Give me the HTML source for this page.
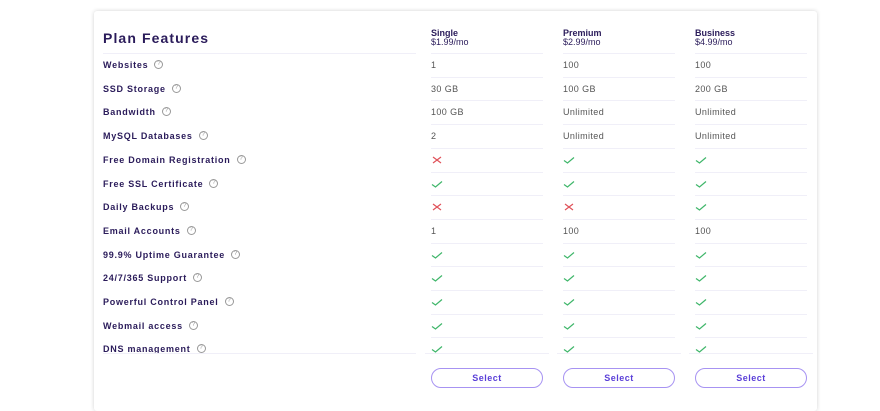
<!DOCTYPE html>
<html><head><style>
body{margin:0;width:880px;height:400px;background:#fff;position:relative;overflow:hidden;font-family:"Liberation Sans",sans-serif}
.card{position:absolute;left:94px;top:11px;width:723px;height:400px;background:#fff;box-shadow:0 0 4px rgba(0,0,0,.18);border-radius:3px}
.t{position:absolute;left:103px;top:30px;font-size:14px;font-weight:bold;color:#2a1b5a;letter-spacing:1.1px}
.h{position:absolute;font-size:9px;color:#2a1b5a;line-height:9px}
.h b{display:block}
.row{position:absolute;left:0;width:880px;height:24px}
.l{position:absolute;left:103px;top:7px;font-size:9px;line-height:10px;font-weight:bold;color:#2a1b5a;letter-spacing:.75px;white-space:nowrap}
.q{display:inline-block;width:7px;height:7px;border:1px solid #999;border-radius:50%;font-size:6px;line-height:7px;text-align:center;color:#999;margin-left:6px;vertical-align:top;margin-top:0;font-weight:normal;letter-spacing:0}
.v{position:absolute;top:7px;font-size:9px;line-height:10px;color:#555;letter-spacing:.4px}
.c1{left:431px}.c2{left:563px}.c3{left:695px}
.ln{position:absolute;top:0;height:1px;background:#f0eff8}
.bt{position:absolute;top:368px;width:110px;height:18px;border:1px solid #a793f2;border-radius:10px;color:#5a3fd8;font-size:9px;font-weight:bold;text-align:center;line-height:18px;letter-spacing:.5px}
svg{position:absolute;top:8px}
</style></head><body>
<div class="card"></div>
<div class="t">Plan Features</div>
<div class="ln" style="left:103px;width:313px;top:53px"></div>
<div class="h c1" style="top:29px"><b>Single</b>$1.99/mo</div>
<div class="h c2" style="top:29px"><b>Premium</b>$2.99/mo</div>
<div class="h c3" style="top:29px"><b>Business</b>$4.99/mo</div>
<svg width="0" height="0" style="position:absolute">
<defs>
<symbol id="ok" viewBox="0 0 12 8"><path d="M1 4.5 L4.5 7 L11 1.5" fill="none" stroke="#3fb66a" stroke-width="1.2"/></symbol>
<symbol id="no" viewBox="0 0 12 8"><path d="M2 1 L10 7 M10 1 L2 7" fill="none" stroke="#e0525a" stroke-width="1.2"/></symbol>
</defs></svg>

<div class="row" style="top:53px"><div class="ln" style="left:431px;width:112px"></div><div class="ln" style="left:563px;width:112px"></div><div class="ln" style="left:695px;width:112px"></div><div class="l">Websites<span class="q">?</span></div><div class="v c1">1</div><div class="v c2">100</div><div class="v c3">100</div></div>
<div class="row" style="top:76.7px"><div class="ln" style="left:431px;width:112px"></div><div class="ln" style="left:563px;width:112px"></div><div class="ln" style="left:695px;width:112px"></div><div class="l">SSD Storage<span class="q">?</span></div><div class="v c1">30 GB</div><div class="v c2">100 GB</div><div class="v c3">200 GB</div></div>
<div class="row" style="top:100.4px"><div class="ln" style="left:431px;width:112px"></div><div class="ln" style="left:563px;width:112px"></div><div class="ln" style="left:695px;width:112px"></div><div class="l">Bandwidth<span class="q">?</span></div><div class="v c1">100 GB</div><div class="v c2">Unlimited</div><div class="v c3">Unlimited</div></div>
<div class="row" style="top:124.1px"><div class="ln" style="left:431px;width:112px"></div><div class="ln" style="left:563px;width:112px"></div><div class="ln" style="left:695px;width:112px"></div><div class="l">MySQL Databases<span class="q">?</span></div><div class="v c1">2</div><div class="v c2">Unlimited</div><div class="v c3">Unlimited</div></div>
<div class="row" style="top:147.8px"><div class="ln" style="left:431px;width:112px"></div><div class="ln" style="left:563px;width:112px"></div><div class="ln" style="left:695px;width:112px"></div><div class="l">Free Domain Registration<span class="q">?</span></div><svg class="c1" width="12" height="8"><use href="#no"/></svg><svg class="c2" width="12" height="8"><use href="#ok"/></svg><svg class="c3" width="12" height="8"><use href="#ok"/></svg></div>
<div class="row" style="top:171.5px"><div class="ln" style="left:431px;width:112px"></div><div class="ln" style="left:563px;width:112px"></div><div class="ln" style="left:695px;width:112px"></div><div class="l">Free SSL Certificate<span class="q">?</span></div><svg class="c1" width="12" height="8"><use href="#ok"/></svg><svg class="c2" width="12" height="8"><use href="#ok"/></svg><svg class="c3" width="12" height="8"><use href="#ok"/></svg></div>
<div class="row" style="top:195.2px"><div class="ln" style="left:431px;width:112px"></div><div class="ln" style="left:563px;width:112px"></div><div class="ln" style="left:695px;width:112px"></div><div class="l">Daily Backups<span class="q">?</span></div><svg class="c1" width="12" height="8"><use href="#no"/></svg><svg class="c2" width="12" height="8"><use href="#no"/></svg><svg class="c3" width="12" height="8"><use href="#ok"/></svg></div>
<div class="row" style="top:218.9px"><div class="ln" style="left:431px;width:112px"></div><div class="ln" style="left:563px;width:112px"></div><div class="ln" style="left:695px;width:112px"></div><div class="l">Email Accounts<span class="q">?</span></div><div class="v c1">1</div><div class="v c2">100</div><div class="v c3">100</div></div>
<div class="row" style="top:242.6px"><div class="ln" style="left:431px;width:112px"></div><div class="ln" style="left:563px;width:112px"></div><div class="ln" style="left:695px;width:112px"></div><div class="l">99.9% Uptime Guarantee<span class="q">?</span></div><svg class="c1" width="12" height="8"><use href="#ok"/></svg><svg class="c2" width="12" height="8"><use href="#ok"/></svg><svg class="c3" width="12" height="8"><use href="#ok"/></svg></div>
<div class="row" style="top:266.3px"><div class="ln" style="left:431px;width:112px"></div><div class="ln" style="left:563px;width:112px"></div><div class="ln" style="left:695px;width:112px"></div><div class="l">24/7/365 Support<span class="q">?</span></div><svg class="c1" width="12" height="8"><use href="#ok"/></svg><svg class="c2" width="12" height="8"><use href="#ok"/></svg><svg class="c3" width="12" height="8"><use href="#ok"/></svg></div>
<div class="row" style="top:290px"><div class="ln" style="left:431px;width:112px"></div><div class="ln" style="left:563px;width:112px"></div><div class="ln" style="left:695px;width:112px"></div><div class="l">Powerful Control Panel<span class="q">?</span></div><svg class="c1" width="12" height="8"><use href="#ok"/></svg><svg class="c2" width="12" height="8"><use href="#ok"/></svg><svg class="c3" width="12" height="8"><use href="#ok"/></svg></div>
<div class="row" style="top:313.7px"><div class="ln" style="left:431px;width:112px"></div><div class="ln" style="left:563px;width:112px"></div><div class="ln" style="left:695px;width:112px"></div><div class="l">Webmail access<span class="q">?</span></div><svg class="c1" width="12" height="8"><use href="#ok"/></svg><svg class="c2" width="12" height="8"><use href="#ok"/></svg><svg class="c3" width="12" height="8"><use href="#ok"/></svg></div>
<div class="row" style="top:337.4px"><div class="ln" style="left:431px;width:112px"></div><div class="ln" style="left:563px;width:112px"></div><div class="ln" style="left:695px;width:112px"></div><div class="l">DNS management<span class="q">?</span></div><svg class="c1" width="12" height="8"><use href="#ok"/></svg><svg class="c2" width="12" height="8"><use href="#ok"/></svg><svg class="c3" width="12" height="8"><use href="#ok"/></svg></div>
<div style="position:absolute;left:95px;width:721px;top:353px;height:15px;background:#fff"></div>
<div class="ln" style="left:103px;width:313px;top:353px"></div><div class="ln" style="left:425px;width:124px;top:353px"></div><div class="ln" style="left:557px;width:124px;top:353px"></div><div class="ln" style="left:689px;width:124px;top:353px"></div>
<div class="bt" style="left:431px">Select</div>
<div class="bt" style="left:563px">Select</div>
<div class="bt" style="left:695px">Select</div>
</body></html>
